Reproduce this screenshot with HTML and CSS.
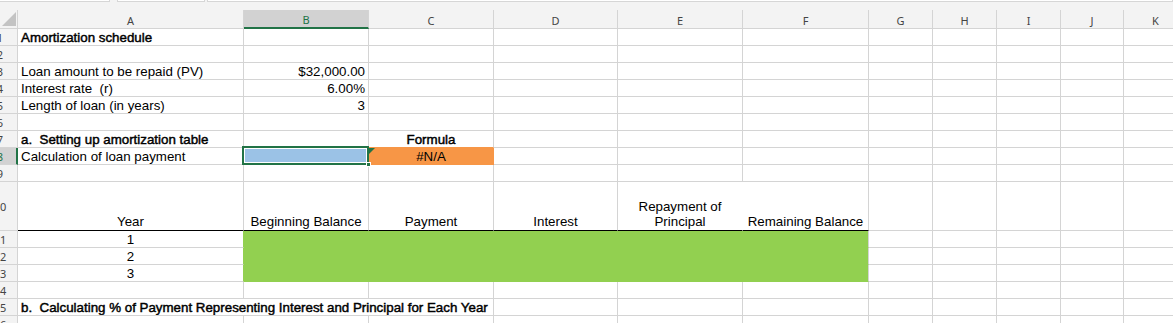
FILE: index.html
```html
<!DOCTYPE html>
<html>
<head>
  <title>Amortization schedule</title>
  <link rel="stylesheet" href="styles.css">
</head>
<body>
  <div class="topbar">
    <span class="box b1"></span><span class="box b2"></span><span class="box b3"></span>
  </div>
  <div class="sheet">
    <!-- column headers -->
    <div class="row hdr">
      <div class="corner">
        <svg width="17" height="18" viewBox="0 0 17 18"><polygon points="2,16 16,16 16,2" fill="#c3c3c3"/></svg>
      </div>
      <div class="ch">A</div>
      <div class="ch sel">B</div>
      <div class="ch">C</div>
      <div class="ch">D</div>
      <div class="ch">E</div>
      <div class="ch">F</div>
      <div class="ch">G</div>
      <div class="ch">H</div>
      <div class="ch">I</div>
      <div class="ch">J</div>
      <div class="ch">K</div>
    </div>

    <div class="row">
      <div class="rh"><span>1</span></div>
      <div class="c b">Amortization schedule</div>
      <div class="c"></div><div class="c"></div><div class="c"></div><div class="c"></div><div class="c"></div>
      <div class="c"></div><div class="c"></div><div class="c"></div><div class="c"></div><div class="c"></div>
    </div>
    <div class="row">
      <div class="rh"><span>2</span></div>
      <div class="c"></div><div class="c"></div><div class="c"></div><div class="c"></div><div class="c"></div>
      <div class="c"></div><div class="c"></div><div class="c"></div><div class="c"></div><div class="c"></div><div class="c"></div>
    </div>
    <div class="row">
      <div class="rh"><span>3</span></div>
      <div class="c">Loan amount to be repaid (PV)</div>
      <div class="c r">$32,000.00</div>
      <div class="c"></div><div class="c"></div><div class="c"></div><div class="c"></div>
      <div class="c"></div><div class="c"></div><div class="c"></div><div class="c"></div><div class="c"></div>
    </div>
    <div class="row">
      <div class="rh"><span>4</span></div>
      <div class="c">Interest rate  (r)</div>
      <div class="c r">6.00%</div>
      <div class="c"></div><div class="c"></div><div class="c"></div><div class="c"></div>
      <div class="c"></div><div class="c"></div><div class="c"></div><div class="c"></div><div class="c"></div>
    </div>
    <div class="row">
      <div class="rh"><span>5</span></div>
      <div class="c">Length of loan (in years)</div>
      <div class="c r">3</div>
      <div class="c"></div><div class="c"></div><div class="c"></div><div class="c"></div>
      <div class="c"></div><div class="c"></div><div class="c"></div><div class="c"></div><div class="c"></div>
    </div>
    <div class="row">
      <div class="rh"><span>6</span></div>
      <div class="c"></div><div class="c"></div><div class="c"></div><div class="c"></div><div class="c"></div>
      <div class="c"></div><div class="c"></div><div class="c"></div><div class="c"></div><div class="c"></div><div class="c"></div>
    </div>
    <div class="row">
      <div class="rh"><span>7</span></div>
      <div class="c b">a.  Setting up amortization table</div>
      <div class="c"></div>
      <div class="c b m above-err">Formula</div>
      <div class="c"></div><div class="c"></div><div class="c"></div>
      <div class="c"></div><div class="c"></div><div class="c"></div><div class="c"></div><div class="c"></div>
    </div>
    <div class="row">
      <div class="rh sel"><span>8</span></div>
      <div class="c">Calculation of loan payment</div>
      <div class="c pick"></div>
      <div class="c m err">#N/A</div>
      <div class="c"></div><div class="c"></div><div class="c"></div>
      <div class="c"></div><div class="c"></div><div class="c"></div><div class="c"></div><div class="c"></div>
    </div>
    <div class="row">
      <div class="rh"><span>9</span></div>
      <div class="c"></div><div class="c"></div><div class="c"></div><div class="c"></div><div class="c"></div>
      <div class="c"></div><div class="c"></div><div class="c"></div><div class="c"></div><div class="c"></div><div class="c"></div>
    </div>
    <div class="row tall">
      <div class="rh"><span>10</span></div>
      <div class="c m hl">Year</div>
      <div class="c m hl">Beginning Balance</div>
      <div class="c m hl">Payment</div>
      <div class="c m hl">Interest</div>
      <div class="c m hl wrap nosep"><span>Repayment of Principal</span></div>
      <div class="c m hl">Remaining Balance</div>
      <div class="c"></div><div class="c"></div><div class="c"></div><div class="c"></div><div class="c"></div>
    </div>
    <div class="row">
      <div class="rh"><span>11</span></div>
      <div class="c m gl">1</div>
      <div class="c g"></div><div class="c g"></div><div class="c g"></div><div class="c g"></div><div class="c g ge"></div>
      <div class="c"></div><div class="c"></div><div class="c"></div><div class="c"></div><div class="c"></div>
    </div>
    <div class="row">
      <div class="rh"><span>12</span></div>
      <div class="c m gl">2</div>
      <div class="c g"></div><div class="c g"></div><div class="c g"></div><div class="c g"></div><div class="c g ge"></div>
      <div class="c"></div><div class="c"></div><div class="c"></div><div class="c"></div><div class="c"></div>
    </div>
    <div class="row">
      <div class="rh"><span>13</span></div>
      <div class="c m gl">3</div>
      <div class="c g"></div><div class="c g"></div><div class="c g"></div><div class="c g"></div><div class="c g ge"></div>
      <div class="c"></div><div class="c"></div><div class="c"></div><div class="c"></div><div class="c"></div>
    </div>
    <div class="row">
      <div class="rh"><span>14</span></div>
      <div class="c"></div><div class="c"></div><div class="c"></div><div class="c"></div><div class="c"></div>
      <div class="c"></div><div class="c"></div><div class="c"></div><div class="c"></div><div class="c"></div><div class="c"></div>
    </div>
    <div class="row">
      <div class="rh"><span>15</span></div>
      <div class="c b span3">b.  Calculating % of Payment Representing Interest and Principal for Each Year</div>
      <div class="c"></div><div class="c"></div><div class="c"></div>
      <div class="c"></div><div class="c"></div><div class="c"></div><div class="c"></div><div class="c"></div>
    </div>
    <div class="row">
      <div class="rh"><span>16</span></div>
      <div class="c"></div><div class="c"></div><div class="c"></div><div class="c"></div><div class="c"></div>
      <div class="c"></div><div class="c"></div><div class="c"></div><div class="c"></div><div class="c"></div><div class="c"></div>
    </div>
  </div>
</body>
</html>
```

FILE: styles.css
```css
body {
  margin: 0;
  background: #fff;
  font-family: "Liberation Sans", Arial, sans-serif;
  overflow: hidden;
}
.topbar {
  height: 10px;
  background: #f3f3f3;
  display: flex;
  align-items: flex-start;
}
.box {
  height: 1px;
  background: #fff;
  border: 1px solid #d6d6d6;
  border-top: 0;
}
.b1 {
  width: 109px;
  border-left: 0;
}
.b2 {
  width: 86px;
  margin-left: 7px;
}
.b3 {
  flex: 1;
  margin-left: 2px;
}
.row {
  display: grid;
  grid-template-columns: 18px 226px 125px 125px 124px 125px 126px 64px 64px 64px 63px 64px;
  height: 17px;
}
.row.hdr {
  height: 19px;
  background: #f3f3f3;
}
.row.tall {
  height: 49px;
}
.corner {
  border-right: 1px solid #d4d4d4;
  border-bottom: 1px solid #d4d4d4;
}
.corner svg {
  display: block;
}
.ch {
  box-sizing: border-box;
  border-right: 1px solid #d4d4d4;
  border-bottom: 1px solid #d4d4d4;
  display: flex;
  justify-content: center;
  align-items: center;
  padding-top: 2px;
  font: 11px "Noto Sans", sans-serif;
  color: #444;
}
.ch.sel {
  background: #d2d2d2;
  color: #217346;
  border-bottom: 2px solid #217346;
}
.rh {
  box-sizing: border-box;
  background: #f3f3f3;
  border-right: 1px solid #d4d4d4;
  border-bottom: 1px solid #d4d4d4;
  overflow: hidden;
  display: flex;
  align-items: center;
  font: 11px "Noto Sans", sans-serif;
  color: #444;
}
.rh span {
  flex: none;
  width: 36px;
  margin-left: -18px;
  text-align: center;
}
.rh.sel {
  background: #d2d2d2;
  border-right: 2px solid #217346;
  color: #217346;
}
.c {
  box-sizing: border-box;
  min-width: 0;
  border-right: 1px solid #d4d4d4;
  border-bottom: 1px solid #d4d4d4;
  padding: 0 3px;
  display: flex;
  align-items: flex-end;
  font-size: 13.33px;
  line-height: 15px;
  color: #000;
  white-space: pre;
  overflow: hidden;
}
.c.r {
  justify-content: flex-end;
}
.c.m {
  justify-content: center;
  text-align: center;
}
.c.b {
  -webkit-text-stroke: 0.45px #000;
}
.row.tall .c {
  padding-bottom: 1px;
}
.c.wrap {
  white-space: normal;
}
.c.hl {
  border-bottom-color: #000;
}
.c.nosep {
  border-right-color: #fff;
}
.c.span3 {
  grid-column: span 3;
}
.c.g {
  background: #92d050;
  border-color: #92d050;
}
.c.ge {
  border-right-color: #d4d4d4;
}
.c.gl {
  border-right-color: #92d050;
}
.c.above-err {
  border-bottom-color: #f79646;
}
.c.err {
  position: relative;
  background: #f79646;
  border-color: #f79646;
}
.c.err::before {
  content: "";
  position: absolute;
  left: 0;
  top: 0;
  border-top: 6px solid #217346;
  border-right: 6px solid transparent;
}
.c.pick {
  position: relative;
  overflow: visible;
  background: #9bc2e6;
}
.c.pick::before {
  content: "";
  position: absolute;
  left: -2px;
  top: -2px;
  width: 127px;
  height: 19px;
  box-sizing: border-box;
  border: 2px solid #217346;
  box-shadow: inset 0 0 0 1px #fff;
  z-index: 2;
}
.c.pick::after {
  content: "";
  position: absolute;
  left: 122px;
  top: 14px;
  width: 3px;
  height: 3px;
  background: #217346;
  border: 1px solid #fff;
  z-index: 3;
}
```
